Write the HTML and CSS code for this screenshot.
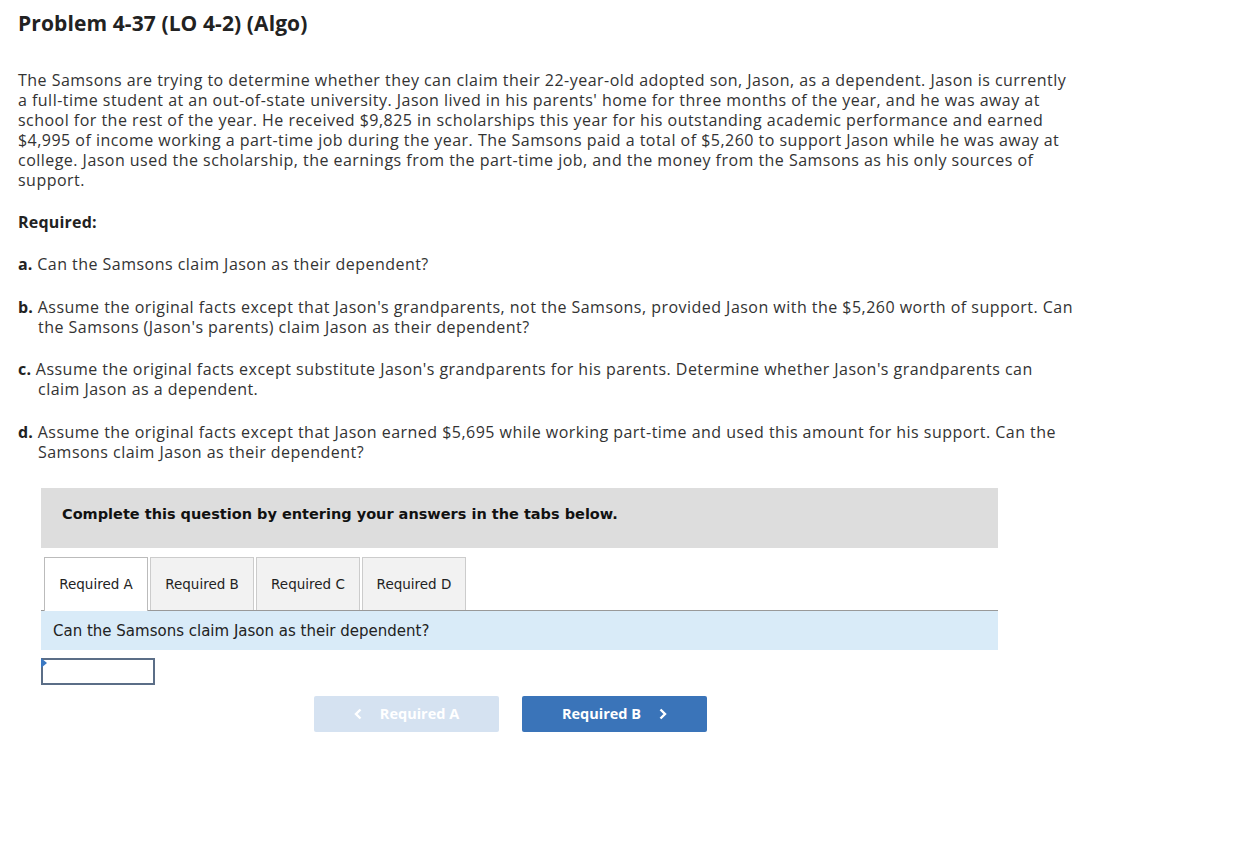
FILE: index.html
```html
<!DOCTYPE html>
<html>
<head>
<meta charset="utf-8">
<link rel="stylesheet" href="styles.css">
</head>
<body>
<div class="page">
  <h1 class="title">Problem 4-37 (LO 4-2) (Algo)</h1>
  <p class="intro">The Samsons are trying to determine whether they can claim their 22-year-old adopted son, Jason, as a dependent. Jason is currently<br>a full-time student at an out-of-state university. Jason lived in his parents' home for three months of the year, and he was away at<br>school for the rest of the year. He received $9,825 in scholarships this year for his outstanding academic performance and earned<br>$4,995 of income working a part-time job during the year. The Samsons paid a total of $5,260 to support Jason while he was away at<br>college. Jason used the scholarship, the earnings from the part-time job, and the money from the Samsons as his only sources of<br>support.</p>
  <p class="req-head">Required:</p>
  <p class="item first"><b>a.</b> Can the Samsons claim Jason as their dependent?</p>
  <p class="item"><b>b.</b> Assume the original facts except that Jason's grandparents, not the Samsons, provided Jason with the $5,260 worth of support. Can<br>the Samsons (Jason's parents) claim Jason as their dependent?</p>
  <p class="item"><b>c.</b> Assume the original facts except substitute Jason's grandparents for his parents. Determine whether Jason's grandparents can<br>claim Jason as a dependent.</p>
  <p class="item"><b>d.</b> Assume the original facts except that Jason earned $5,695 while working part-time and used this amount for his support. Can the<br>Samsons claim Jason as their dependent?</p>

  <div class="widget">
    <div class="banner">Complete this question by entering your answers in the tabs below.</div>
    <div class="tabs">
      <div class="tab active">Required A</div>
      <div class="tab">Required B</div>
      <div class="tab">Required C</div>
      <div class="tab">Required D</div>
    </div>
    <div class="question">Can the Samsons claim Jason as their dependent?</div>
    <div class="answer"><span class="flag"></span></div>
    <div class="nav">
      <div class="btn prev"><svg class="chev" width="8" height="12" viewBox="0 0 8 12"><path d="M6.5 1.5 L2 6 L6.5 10.5" fill="none" stroke="#ffffff" stroke-width="2.4"/></svg>Required A</div>
      <div class="btn next">Required B<svg class="chev" width="8" height="12" viewBox="0 0 8 12"><path d="M1.5 1.5 L6 6 L1.5 10.5" fill="none" stroke="#ffffff" stroke-width="2.4"/></svg></div>
    </div>
  </div>
</div>
</body>
</html>
```
FILE: styles.css
```css
html, body {
  margin: 0;
  padding: 0;
  background: #ffffff;
}
.page {
  padding: 10px 0 0 18px;
  font-family: "Open Sans", "Liberation Sans", sans-serif;
  color: #333333;
  font-size: 16px;
  letter-spacing: 0.47px;
}
.title {
  margin: 0;
  font-size: 21px;
  font-weight: 700;
  color: #222222;
  line-height: 26px;
  letter-spacing: 0.1px;
}
.intro {
  margin: 34px 0 0 0;
  line-height: 20px;
  white-space: nowrap;
}
.req-head {
  margin: 22px 0 0 0;
  line-height: 20px;
  font-weight: 700;
  color: #222222;
  letter-spacing: 0.2px;
}
.item {
  margin: 22.5px 0 0 0;
  line-height: 20px;
  padding-left: 20px;
  text-indent: -20px;
  white-space: nowrap;
}
.item.first {
  margin-top: 22px;
}
.item b {
  color: #222222;
  letter-spacing: 0.2px;
}
.widget {
  margin: 26px 0 0 23px;
  width: 957px;
  font-family: "DejaVu Sans", Verdana, sans-serif;
  letter-spacing: 0;
}
.banner {
  background: #dddddd;
  height: 60px;
  box-sizing: border-box;
  padding: 0 0 8px 21px;
  display: flex;
  align-items: center;
  font-weight: 700;
  font-size: 14.5px;
  color: #111111;
}
.tabs {
  display: flex;
  gap: 2px;
  margin-top: 9px;
  padding-left: 3px;
  border-bottom: 1px solid #999999;
}
.tab {
  width: 102px;
  height: 52px;
  display: flex;
  align-items: center;
  justify-content: center;
  background: #f2f2f2;
  border: 1px solid #cccccc;
  border-bottom: none;
  font-size: 13.5px;
  color: #222222;
}
.tab.active {
  background: #ffffff;
  border-color: #bbbbbb;
  margin-bottom: -1px;
  height: 53px;
}
.question {
  background: #d9ebf8;
  height: 39px;
  box-sizing: border-box;
  padding: 2px 0 0 12px;
  display: flex;
  align-items: center;
  font-size: 15px;
  color: #222222;
}
.answer {
  position: relative;
  margin-top: 8px;
  width: 110px;
  height: 23px;
  border: 2px solid #5b6e87;
}
.flag {
  position: absolute;
  left: -2px;
  top: -2px;
  width: 0;
  height: 0;
  border-top: 5px solid transparent;
  border-bottom: 5px solid transparent;
  border-left: 6px solid #3a78c2;
}
.nav {
  display: flex;
  gap: 23px;
  margin: 11px 0 0 273px;
}
.btn {
  width: 185px;
  height: 36px;
  border-radius: 2px;
  display: flex;
  align-items: center;
  justify-content: center;
  font-family: "Open Sans", "Liberation Sans", sans-serif;
  font-weight: 700;
  font-size: 14.5px;
  color: #ffffff;
}
.btn.prev {
  background: #d5e2f1;
}
.btn.next {
  background: #3a74b9;
}
.prev .chev {
  margin-right: 18px;
}
.next .chev {
  margin-left: 18px;
}
```
